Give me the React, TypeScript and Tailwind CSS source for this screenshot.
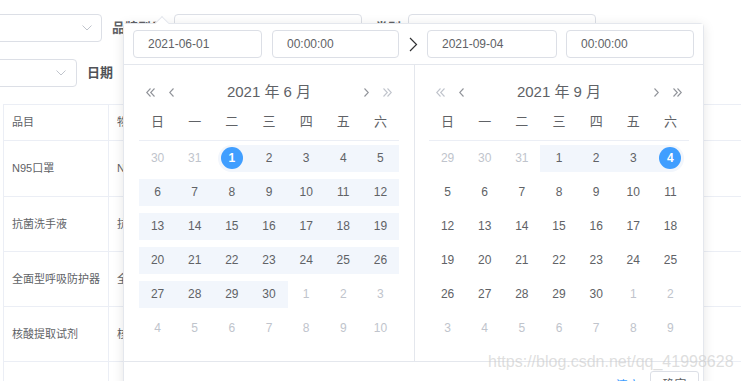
import React from "react";

type Cell = {
  d: number;
  other?: boolean;
  range?: boolean;
  start?: boolean;
  end?: boolean;
};

const weekdays = ["日", "一", "二", "三", "四", "五", "六"];

const juneRows: Cell[][] = [
  [
    { d: 30, other: true },
    { d: 31, other: true },
    { d: 1, start: true },
    { d: 2, range: true },
    { d: 3, range: true },
    { d: 4, range: true },
    { d: 5, range: true },
  ],
  [6, 7, 8, 9, 10, 11, 12].map((d) => ({ d, range: true })),
  [13, 14, 15, 16, 17, 18, 19].map((d) => ({ d, range: true })),
  [20, 21, 22, 23, 24, 25, 26].map((d) => ({ d, range: true })),
  [
    { d: 27, range: true },
    { d: 28, range: true },
    { d: 29, range: true },
    { d: 30, range: true },
    { d: 1, other: true },
    { d: 2, other: true },
    { d: 3, other: true },
  ],
  [4, 5, 6, 7, 8, 9, 10].map((d) => ({ d, other: true })),
];

const septRows: Cell[][] = [
  [
    { d: 29, other: true },
    { d: 30, other: true },
    { d: 31, other: true },
    { d: 1, range: true },
    { d: 2, range: true },
    { d: 3, range: true },
    { d: 4, end: true },
  ],
  [5, 6, 7, 8, 9, 10, 11].map((d) => ({ d })),
  [12, 13, 14, 15, 16, 17, 18].map((d) => ({ d })),
  [19, 20, 21, 22, 23, 24, 25].map((d) => ({ d })),
  [
    { d: 26 },
    { d: 27 },
    { d: 28 },
    { d: 29 },
    { d: 30 },
    { d: 1, other: true },
    { d: 2, other: true },
  ],
  [3, 4, 5, 6, 7, 8, 9].map((d) => ({ d, other: true })),
];

const tableRows = ["N95口罩", "抗菌洗手液", "全面型呼吸防护器", "核酸提取试剂"];

const Chevron = ({ dir, color }: { dir: "left" | "right"; color: string }) => (
  <svg width="5" height="9" viewBox="0 0 5 9">
    <polyline
      points={dir === "left" ? "4.5,0.5 0.7,4.5 4.5,8.5" : "0.5,0.5 4.3,4.5 0.5,8.5"}
      fill="none"
      stroke={color}
      strokeWidth="1.1"
    />
  </svg>
);

const DoubleChevron = ({ dir, color }: { dir: "left" | "right"; color: string }) => (
  <svg width="9" height="9" viewBox="0 0 9 9">
    {dir === "left" ? (
      <>
        <polyline points="4.5,0.5 0.7,4.5 4.5,8.5" fill="none" stroke={color} strokeWidth="1.1" />
        <polyline points="8.5,0.5 4.7,4.5 8.5,8.5" fill="none" stroke={color} strokeWidth="1.1" />
      </>
    ) : (
      <>
        <polyline points="0.5,0.5 4.3,4.5 0.5,8.5" fill="none" stroke={color} strokeWidth="1.1" />
        <polyline points="4.5,0.5 8.3,4.5 4.5,8.5" fill="none" stroke={color} strokeWidth="1.1" />
      </>
    )}
  </svg>
);

const SelectArrow = () => (
  <svg width="10" height="6" viewBox="0 0 10 6">
    <polyline points="0.5,0.5 5,5 9.5,0.5" fill="none" stroke="#c0c4cc" strokeWidth="1" />
  </svg>
);

const DateCell = ({ cell }: { cell: Cell }) => {
  const selected = cell.start || cell.end;
  return (
    <div className="relative flex h-[34px] flex-1 items-center justify-center">
      {cell.range && <div className="absolute inset-x-0 top-[4px] bottom-[3px] bg-[#f2f6fc]" />}
      {cell.start && (
        <div className="absolute left-[5px] right-0 top-[4px] bottom-[3px] rounded-l-[15px] bg-[#f2f6fc]" />
      )}
      {cell.end && (
        <div className="absolute left-0 right-[5px] top-[4px] bottom-[3px] rounded-r-[15px] bg-[#f2f6fc]" />
      )}
      <span
        className={
          selected
            ? "relative flex h-[22px] w-[22px] items-center justify-center rounded-full bg-[#409eff] text-[12px] font-bold text-white"
            : cell.other
            ? "relative text-[12px] text-[#c0c4cc]"
            : "relative text-[12px] text-[#606266]"
        }
      >
        {cell.d}
      </span>
    </div>
  );
};

const Panel = ({
  title,
  rows,
  side,
}: {
  title: string;
  rows: Cell[][];
  side: "left" | "right";
}) => (
  <div className={side === "left" ? "flex-1 border-r border-[#e4e7ed] px-[15px] pb-[16px] pt-[16px]" : "flex-1 px-[14px] pb-[16px] pt-[16px]"}>
    <div className="flex h-[22px] items-center">
      <div className="flex w-[40px] items-center gap-[14px] pl-[7px]">
        <DoubleChevron dir="left" color={side === "left" ? "#909399" : "#c0c4cc"} />
        <Chevron dir="left" color="#909399" />
      </div>
      <div className="flex-1 text-center text-[15px] text-[#606266]">{title}</div>
      <div className="flex w-[40px] items-center justify-end gap-[14px] pr-[7px]">
        <Chevron dir="right" color="#909399" />
        <DoubleChevron dir="right" color={side === "left" ? "#c0c4cc" : "#909399"} />
      </div>
    </div>
    <div className="mt-[7px] flex h-[31px] border-b border-[#ebeef5]">
      {weekdays.map((w) => (
        <div key={w} className="flex-1 text-center text-[13px] leading-[24px] text-[#606266]">
          {w}
        </div>
      ))}
    </div>
    {rows.map((row, i) => (
      <div key={i} className="flex">
        {row.map((cell, j) => (
          <DateCell key={j} cell={cell} />
        ))}
      </div>
    ))}
  </div>
);

const PickerInput = ({ value, className }: { value: string; className: string }) => (
  <div
    className={`flex h-[28px] items-center rounded-[4px] border border-[#dcdfe6] pl-[14px] text-[12px] text-[#606266] ${className}`}
  >
    {value}
  </div>
);

export default function App() {
  return (
    <div className="relative h-[381px] w-[741px] overflow-hidden bg-white font-['Liberation_Sans','Noto_Sans_CJK_SC',sans-serif] text-[#606266]">
      {/* filter form */}
      <div className="pt-[14px]">
        <div className="flex h-[28px] items-center">
          <div className="ml-[-98px] flex h-[28px] w-[200px] items-center justify-end rounded-[4px] border border-[#dcdfe6] pr-[9px]">
            <SelectArrow />
          </div>
          <div className="w-[72px] pl-[10px] text-[13px] font-semibold">品牌型号</div>
          <div className="h-[28px] w-[188px] rounded-[4px] border border-[#dcdfe6]" />
          <div className="w-[46px] pl-[13px] text-[13px] font-semibold">类别</div>
          <div className="h-[28px] w-[188px] rounded-[4px] border border-[#dcdfe6]" />
        </div>
        <div className="mt-[17px] flex h-[28px] items-center">
          <div className="ml-[-120px] flex h-[28px] w-[197px] items-center justify-end rounded-[4px] border border-[#dcdfe6] pr-[10px]">
            <SelectArrow />
          </div>
          <div className="pl-[10px] text-[13px] font-semibold text-[#505257]">日期</div>
        </div>
      </div>

      {/* table */}
      <div className="ml-[3px] mt-[17px] border-l border-t border-[#ebeef5]">
        <div className="flex h-[36px] items-center border-b border-[#ebeef5] text-[11px]">
          <div className="flex h-full w-[105px] items-center border-r border-[#ebeef5] pl-[8px]">品目</div>
          <div className="pl-[8px]">物资名称</div>
        </div>
        {tableRows.map((name, i) => (
          <div
            key={name}
            className={`flex items-center border-b border-[#ebeef5] text-[11px] ${i === 0 ? "h-[56px]" : "h-[55px]"}`}
          >
            <div className="flex h-full w-[105px] items-center border-r border-[#ebeef5] pl-[8px]">{name}</div>
            <div className="pl-[8px]">{name}</div>
          </div>
        ))}
        <div className="flex h-[55px]">
          <div className="h-full w-[105px] border-r border-[#ebeef5]" />
        </div>
      </div>

      {/* date range picker popup */}
      <div className="absolute left-[123px] top-[23px] w-[581px] rounded-[4px] border border-[#e4e7ed] bg-white shadow-[0_2px_12px_0_rgba(0,0,0,0.1)]">
        <div className="absolute left-[33px] top-[-6px] h-[10px] w-[10px] rotate-45 border-l border-t border-[#e4e7ed] bg-white" />
        <div className="relative flex h-[41px] items-center border-b border-[#e4e7ed] bg-white px-[9px]">
          <div className="flex w-[266px] gap-[10px]">
            <PickerInput value="2021-06-01" className="w-[129px]" />
            <PickerInput value="00:00:00" className="w-[127px]" />
          </div>
          <div className="flex w-[28px] justify-center">
            <svg width="9" height="15" viewBox="0 0 9 15">
              <polyline points="1,1 7.5,7.5 1,14" fill="none" stroke="#303133" strokeWidth="1.2" />
            </svg>
          </div>
          <div className="flex w-[267px] gap-[9px]">
            <PickerInput value="2021-09-04" className="w-[130px]" />
            <PickerInput value="00:00:00" className="w-[128px]" />
          </div>
        </div>
        <div className="flex">
          <Panel title="2021 年 6 月" rows={juneRows} side="left" />
          <Panel title="2021 年 9 月" rows={septRows} side="right" />
        </div>
        <div className="flex items-start justify-end border-t border-[#e4e7ed] pr-[4px] pt-[9px] pb-[4px]">
          <span className="mt-[6px] text-[12px] text-[#409eff]">清空</span>
          <div className="ml-[10px] flex h-[28px] w-[49px] items-center justify-center rounded-[3px] border border-[#dcdfe6] text-[12px] text-[#606266]">
            确定
          </div>
        </div>
      </div>

      {/* watermark */}
      <div className="pointer-events-none absolute left-[488px] top-[350px] text-[16px] text-[rgba(200,200,200,0.6)]">
        https://blog.csdn.net/qq_41998628
      </div>
    </div>
  );
}
